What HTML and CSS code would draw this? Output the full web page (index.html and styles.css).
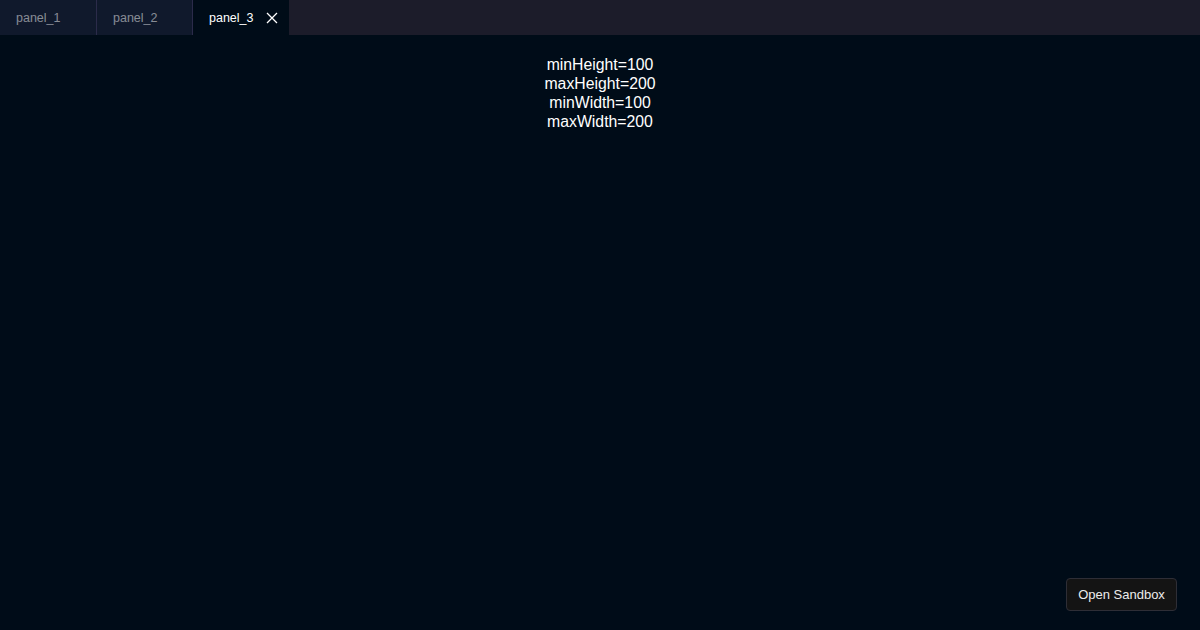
FILE: index.html
```html
<!DOCTYPE html>
<html>
<head>
<meta charset="utf-8">
<link rel="stylesheet" href="styles.css">
</head>
<body>
<div class="dock">
  <div class="tabs">
    <div class="tab">
      <span class="tab-label">panel_1</span>
      <span class="tab-action"></span>
    </div>
    <div class="tab">
      <span class="tab-label">panel_2</span>
      <span class="tab-action narrow"></span>
    </div>
    <div class="tab active">
      <span class="tab-label">panel_3</span>
      <span class="tab-action">
        <svg width="12" height="12" viewBox="0 0 12 12"><path d="M1 1 L11 11 M11 1 L1 11" stroke="#ffffff" stroke-width="1.3" fill="none"/></svg>
      </span>
    </div>
    <div class="tabs-fill"></div>
  </div>
  <div class="content">
    <div>minHeight=100</div>
    <div>maxHeight=200</div>
    <div>minWidth=100</div>
    <div>maxWidth=200</div>
  </div>
</div>
<button class="sandbox">Open Sandbox</button>
</body>
</html>
```
FILE: styles.css
```css
html, body {
  margin: 0;
  padding: 0;
  width: 1200px;
  height: 630px;
  overflow: hidden;
  background: #000c18;
  font-family: "Liberation Sans", Arial, sans-serif;
}
.dock {
  display: flex;
  flex-direction: column;
  height: 630px;
}
.tabs {
  display: flex;
  height: 35px;
  background: #1c1c2a;
  flex-shrink: 0;
}
.tab {
  display: flex;
  align-items: center;
  height: 35px;
  background: #10192c;
  color: rgba(255, 255, 255, 0.5);
  font-size: 12.5px;
  padding-left: 16px;
  box-sizing: border-box;
  border-left: 1px solid #2b2b4a;
}
.tab:first-child {
  border-left: none;
}
.tab.active {
  background: #000c18;
  color: #ffffff;
}
.tab-label {
  white-space: nowrap;
  width: 45px;
}
.tab-action {
  display: flex;
  align-items: center;
  justify-content: center;
  width: 35px;
  height: 35px;
}
.tab-action.narrow {
  width: 34px;
}
.tabs-fill {
  flex: 1;
}
.content {
  flex: 1;
  padding-top: 20px;
  color: #ffffff;
  font-size: 15.8px;
  line-height: 19px;
  text-align: center;
}
.sandbox {
  position: absolute;
  right: 23px;
  bottom: 19px;
  width: 111px;
  height: 33px;
  background: #141414;
  border: 1px solid #2e2e36;
  border-radius: 4px;
  color: #ececec;
  font-family: "Liberation Sans", Arial, sans-serif;
  font-size: 13px;
  padding: 0;
}
```
